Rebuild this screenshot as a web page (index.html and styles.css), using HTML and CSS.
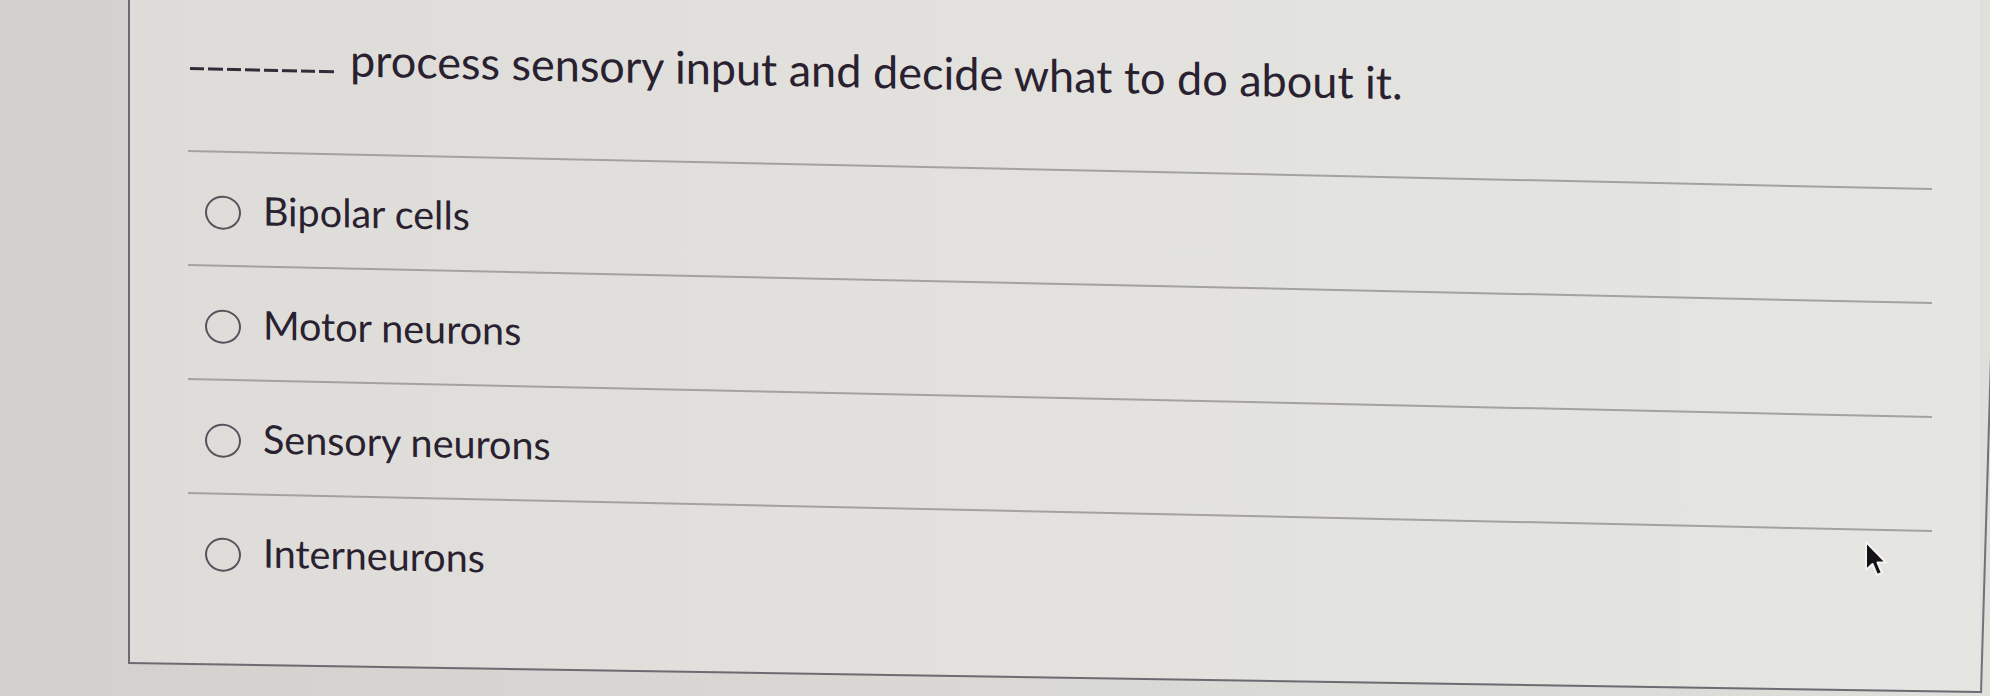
FILE: index.html
```html
<!DOCTYPE html>
<html lang="en">
<head>
<meta charset="utf-8">
<title>Quiz question</title>
<link rel="stylesheet" href="styles.css">
</head>
<body>
<div class="page">
  <div class="card">
    <div class="quiz">
      <div class="question"><span class="blank"></span><span class="qtext">process sensory input and decide what to do about it.</span></div>
      <ul class="answers">
        <li class="answer"><span class="radio"></span><span class="label">Bipolar cells</span></li>
        <li class="answer"><span class="radio"></span><span class="label">Motor neurons</span></li>
        <li class="answer"><span class="radio"></span><span class="label">Sensory neurons</span></li>
        <li class="answer"><span class="radio"></span><span class="label">Interneurons</span></li>
      </ul>
    </div>
  </div>
  <svg class="cursor" width="26" height="40" viewBox="0 0 26 40">
    <path d="M2 2 L2 30 L8.5 24 L13 35 L18 33 L13.5 22.5 L22 22.5 Z" fill="#141016" stroke="#f4f4f4" stroke-width="2" stroke-linejoin="round"/>
  </svg>
</div>
</body>
</html>
```

FILE: styles.css
```css
html, body {
  margin: 0;
  padding: 0;
}

body {
  background: #d6d5d1;
  font-family: Lato, "Noto Sans", sans-serif;
  color: #2a2130;
  overflow: hidden;
}

.page {
  display: flow-root;
  position: relative;
  width: 1990px;
  height: 696px;
  overflow: hidden;
  background: linear-gradient(90deg, #d2d1cd 0%, #d8d7d3 40%, #dcdcd8 90%, #dfdfdb 100%);
}

.card {
  position: relative;
  box-sizing: border-box;
  margin-left: 128px;
  margin-top: -60px;
  width: 1852px;
  height: 724px;
  padding: 60px 48px 0 58px;
  border: 2px solid #6e6a72;
  border-top: none;
  border-right: none;
  background: linear-gradient(90deg, #dddcd8 0%, #e2e1dd 45%, #e5e5e1 100%);
  transform: skewY(0.9deg);
  transform-origin: 0 0;
}

.card::after {
  content: "";
  position: absolute;
  right: -2px;
  bottom: -2px;
  width: 2px;
  height: 470px;
  background: #75717a;
  transform: rotate(1.7deg);
  transform-origin: 0 100%;
}

.quiz {
  transform: skewY(0.35deg);
  transform-origin: 0 0;
}

.question {
  box-sizing: border-box;
  height: 149px;
  padding-top: 29px;
  font-size: 45px;
  line-height: 52px;
  white-space: nowrap;
}

.blank {
  display: inline-block;
  width: 144px;
  height: 3px;
  margin: 0 16px 3px 2px;
  background: repeating-linear-gradient(90deg, #332b3a 0 14.5px, transparent 14.5px 18.5px);
}

.answers {
  list-style: none;
  margin: 0;
  padding: 0;
}

.answer {
  box-sizing: border-box;
  display: flex;
  align-items: flex-start;
  height: 114px;
  padding: 34px 0 0 17px;
  border-top: 2px solid #a3a29f;
}

.radio {
  box-sizing: border-box;
  flex: none;
  width: 36px;
  height: 34px;
  margin-top: 9px;
  border: 2.5px solid #58525c;
  border-radius: 50%;
}

.label {
  margin-left: 22px;
  font-size: 39.5px;
  line-height: 46px;
  white-space: nowrap;
}

.cursor {
  position: absolute;
  left: 1864px;
  top: 540px;
}
```
